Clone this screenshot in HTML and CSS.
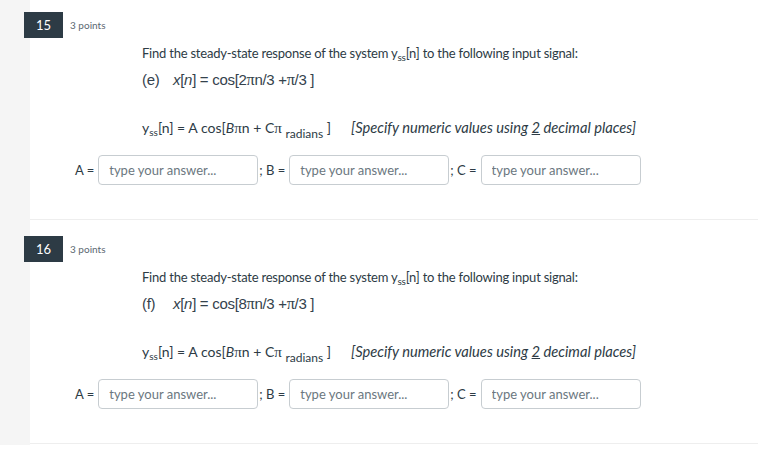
FILE: index.html
```html
<!DOCTYPE html>
<html>
<head>
<meta charset="utf-8">
<link rel="stylesheet" href="styles.css">
</head>
<body>
<div class="page">
  <div class="quiz">
    <section class="question">
      <div class="q-header">
        <span class="q-num">15</span>
        <span class="q-points">3 points</span>
      </div>
      <div class="q-text">
        <p class="line intro">Find the steady-state response of the system y<sub class="sub">ss</sub>[n] to the following input signal:</p>
        <p class="line formula"><span class="part">(e)</span><i>x</i>[<i>n</i>] = cos[2<span class="pi">π</span>n/3 +<span class="pi">π</span>/3 ]</p>
        <p class="line eq">y<sub class="sub">ss</sub>[n] = A cos[<i>B</i><span class="pi">π</span>n + C<span class="pi">π</span> <sub class="rad">radians</sub> ]<i class="note">[Specify numeric values using <u>2</u> decimal places]</i></p>
      </div>
      <div class="answers">
        <span class="lbl">A =</span><input class="ans" type="text" placeholder="type your answer...">
        <span class="lbl sep">; B =</span><input class="ans" type="text" placeholder="type your answer...">
        <span class="lbl sep">; C =</span><input class="ans" type="text" placeholder="type your answer...">
      </div>
    </section>
    <section class="question">
      <div class="q-header">
        <span class="q-num">16</span>
        <span class="q-points">3 points</span>
      </div>
      <div class="q-text">
        <p class="line intro">Find the steady-state response of the system y<sub class="sub">ss</sub>[n] to the following input signal:</p>
        <p class="line formula"><span class="part">(f)</span><i>x</i>[<i>n</i>] = cos[8<span class="pi">π</span>n/3 +<span class="pi">π</span>/3 ]</p>
        <p class="line eq">y<sub class="sub">ss</sub>[n] = A cos[<i>B</i><span class="pi">π</span>n + C<span class="pi">π</span> <sub class="rad">radians</sub> ]<i class="note">[Specify numeric values using <u>2</u> decimal places]</i></p>
      </div>
      <div class="answers">
        <span class="lbl">A =</span><input class="ans" type="text" placeholder="type your answer...">
        <span class="lbl sep">; B =</span><input class="ans" type="text" placeholder="type your answer...">
        <span class="lbl sep">; C =</span><input class="ans" type="text" placeholder="type your answer...">
      </div>
    </section>
  </div>
</div>
</body>
</html>
```

FILE: styles.css
```css
html, body {
  margin: 0;
  padding: 0;
  background: #ffffff;
}

body {
  font-family: Lato, "Liberation Sans", sans-serif;
  color: #2d3b45;
  overflow: hidden;
}

.page {
  height: 449px;
  border-left: 30px solid #f5f5f5;
}

.quiz {
  margin-top: -4px;
}

.question {
  padding: 16px 0 34px 0;
  border-bottom: 1px solid #eeeeee;
}

.q-header {
  display: flex;
  align-items: center;
  gap: 7px;
  margin-left: -6px;
  height: 26px;
}

.q-num {
  width: 39px;
  height: 26px;
  background: #2d3b45;
  color: #ffffff;
  font-size: 13px;
  display: flex;
  align-items: center;
  justify-content: center;
}

.q-points {
  font-size: 10px;
  color: #5b6871;
}

.q-text {
  margin: 5px 0 0 112px;
}

.line {
  margin: 0;
  font-size: 13px;
  line-height: 20px;
  white-space: nowrap;
}

.intro {
  letter-spacing: -0.22px;
}

.formula {
  margin-top: 7px;
  font-family: "Liberation Sans", Arial, sans-serif;
  font-size: 15px;
  letter-spacing: -0.3px;
  color: #34424c;
}

.part {
  display: inline-block;
  width: 31px;
}

.eq {
  margin-top: 28px;
  font-size: 14px;
  height: 20px;
}

.sub {
  font-size: 10px;
  vertical-align: -3px;
  line-height: 0;
}

.rad {
  font-size: 12px;
  vertical-align: -5px;
  line-height: 0;
}

.pi {
  font-family: "Liberation Serif", "Times New Roman", serif;
  font-size: 1.08em;
}

.note {
  font-style: italic;
  font-size: 14.7px;
  line-height: 1;
  margin-left: 20px;
}

.answers {
  margin: 17px 0 0 45px;
  display: flex;
  align-items: center;
  font-size: 13px;
}

.lbl {
  margin-right: 4px;
}

.lbl.sep {
  margin-left: 1px;
}

.ans {
  box-sizing: border-box;
  width: 160px;
  height: 30px;
  border: 1px solid #c7cdd1;
  border-radius: 4px;
  padding: 0 10px;
  font-family: Lato, "Liberation Sans", sans-serif;
  font-size: 13px;
  color: #2d3b45;
  background: #ffffff;
  outline: none;
}

.ans::placeholder {
  color: #6b7780;
}
```
